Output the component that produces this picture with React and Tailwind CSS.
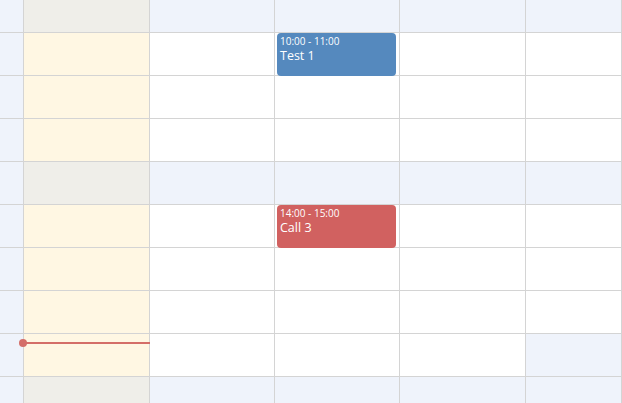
import React from "react"

const rows = [
  { kind: "off" },
  { kind: "work" },
  { kind: "work" },
  { kind: "work" },
  { kind: "off" },
  { kind: "work" },
  { kind: "work" },
  { kind: "work" },
  { kind: "late" },
  { kind: "off" },
]

const widths = ["w-[24px]", "w-[126px]", "w-[125px]", "w-[125px]", "w-[126px]", "flex-1"]

const events = {
  "1-3": { time: "10:00 - 11:00", title: "Test 1", color: "bg-[#5589be]" },
  "5-3": { time: "14:00 - 15:00", title: "Call 3", color: "bg-[#d16160]" },
}

function cellBg(kind, col) {
  if (col === 0) return "bg-[#eff3fb]"
  if (col === 1) return kind === "off" ? "bg-[#efeee9]" : "bg-[#fff7e3]"
  if (kind === "off") return "bg-[#eff3fb]"
  if (kind === "late" && col === 5) return "bg-[#eff3fb]"
  return "bg-white"
}

export default function App() {
  return (
    <div
      className="w-[622px] h-[403px] overflow-hidden bg-white"
      style={{ fontFamily: '"Open Sans", "Liberation Sans", sans-serif' }}
    >
      {rows.map((row, r) => (
        <div key={r} className={"flex " + (r === 0 ? "h-[33px]" : "h-[43px]")}>
          {widths.map((w, c) => {
            const ev = events[r + "-" + c]
            return (
              <div
                key={c}
                className={
                  "relative shrink-0 border-b border-r border-[#d4d4d4] " +
                  w +
                  " " +
                  cellBg(row.kind, c)
                }
              >
                {ev && (
                  <div
                    className={
                      "absolute left-[2px] right-[3px] top-0 h-[43px] z-10 rounded-[4px] px-[3px] pt-[2px] text-white leading-tight " +
                      ev.color
                    }
                  >
                    <div className="text-[10px] leading-[13px]">{ev.time}</div>
                    <div className="text-[12.5px] leading-[16px]">{ev.title}</div>
                  </div>
                )}
                {r === 8 && c === 1 && (
                  <div className="absolute left-[-1px] right-[-1px] top-[8px] h-[2px] bg-[#d46e68] z-10">
                    <div className="absolute left-[-4px] top-[-3px] w-[8px] h-[8px] rounded-full bg-[#d46e68]" />
                  </div>
                )}
              </div>
            )
          })}
        </div>
      ))}
    </div>
  )
}
